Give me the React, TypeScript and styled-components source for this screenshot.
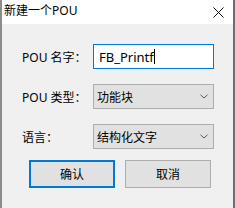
import { FC } from "react";
import styled, { createGlobalStyle } from "styled-components";

const GlobalStyle = createGlobalStyle`
	html, body {
		margin: 0;
		padding: 0;
		background: #f0f0f0;
	}
	body {
		font-family: "Noto Sans", "Noto Sans CJK SC", sans-serif;
		font-size: 12px;
		color: #000;
	}
`;

const Window = styled.div`
	width: 235px;
	height: 208px;
	box-sizing: border-box;
	border-left: 2px solid #8c8c8c;
	border-right: 2px solid #6e6e6e;
	background: #f0f0f0;
	display: flex;
	flex-direction: column;
`;

const TitleBar = styled.div`
	height: 24px;
	background: #fff;
	display: flex;
	align-items: center;
	justify-content: space-between;
	padding: 0 9px 0 2px;
	flex-shrink: 0;
`;

const Title = styled.span`
	font-size: 12px;
	line-height: 14px;
	margin-top: -2px;
`;

const Body = styled.div`
	padding: 20px 0 0 20px;
`;

const Form = styled.div`
	display: grid;
	grid-template-columns: 71px 121px;
	grid-auto-rows: 25px;
	row-gap: 15px;
	align-items: center;
`;

const Label = styled.span`
	font-size: 12px;
	white-space: pre;
`;

const TextBox = styled.div`
	height: 25px;
	box-sizing: border-box;
	border: 1px solid #0078d7;
	background: #fff;
	display: flex;
	align-items: center;
	padding-left: 5px;
	font-size: 13px;
`;

const Caret = styled.span`
	display: inline-block;
	width: 1px;
	height: 15px;
	background: #000;
	margin-left: 0px;
`;

const Combo = styled.div`
	height: 25px;
	box-sizing: border-box;
	border: 1px solid #adadad;
	background: #e1e1e1;
	display: flex;
	align-items: center;
	justify-content: space-between;
	padding: 0 5px 0 3px;
	font-size: 12px;
`;

const Buttons = styled.div`
	display: flex;
	gap: 10px;
	margin: 11px 0 0 7px;
`;

const Button = styled.div<{ $primary?: boolean }>`
	width: 86px;
	height: 28px;
	box-sizing: border-box;
	border: ${(p) => (p.$primary ? "2px solid #0078d7" : "1px solid #adadad")};
	background: #e1e1e1;
	display: flex;
	align-items: center;
	justify-content: center;
	font-size: 12px;
`;

const Chevron = () => (
	<svg width="8" height="5" viewBox="0 0 8 5">
		<path d="M0.5 0.8 L4 4 L7.5 0.8" fill="none" stroke="#5a5a5a" strokeWidth="1" />
	</svg>
);

const CloseIcon = () => (
	<svg width="11" height="11" viewBox="0 0 11 11">
		<path d="M0.5 0.5 L10.5 10.5 M10.5 0.5 L0.5 10.5" stroke="#111" strokeWidth="1" />
	</svg>
);

const App: FC = () => {
	return (
		<>
			<GlobalStyle />
			<Window>
				<TitleBar>
					<Title>新建一个POU</Title>
					<CloseIcon />
				</TitleBar>
				<Body>
					<Form>
						<Label>POU 名字：</Label>
						<TextBox>
							FB_Printf
							<Caret />
						</TextBox>
						<Label>POU 类型：</Label>
						<Combo>
							功能块
							<Chevron />
						</Combo>
						<Label>语言：</Label>
						<Combo>
							结构化文字
							<Chevron />
						</Combo>
					</Form>
					<Buttons>
						<Button $primary>确认</Button>
						<Button>取消</Button>
					</Buttons>
				</Body>
			</Window>
		</>
	);
};

export default App;
